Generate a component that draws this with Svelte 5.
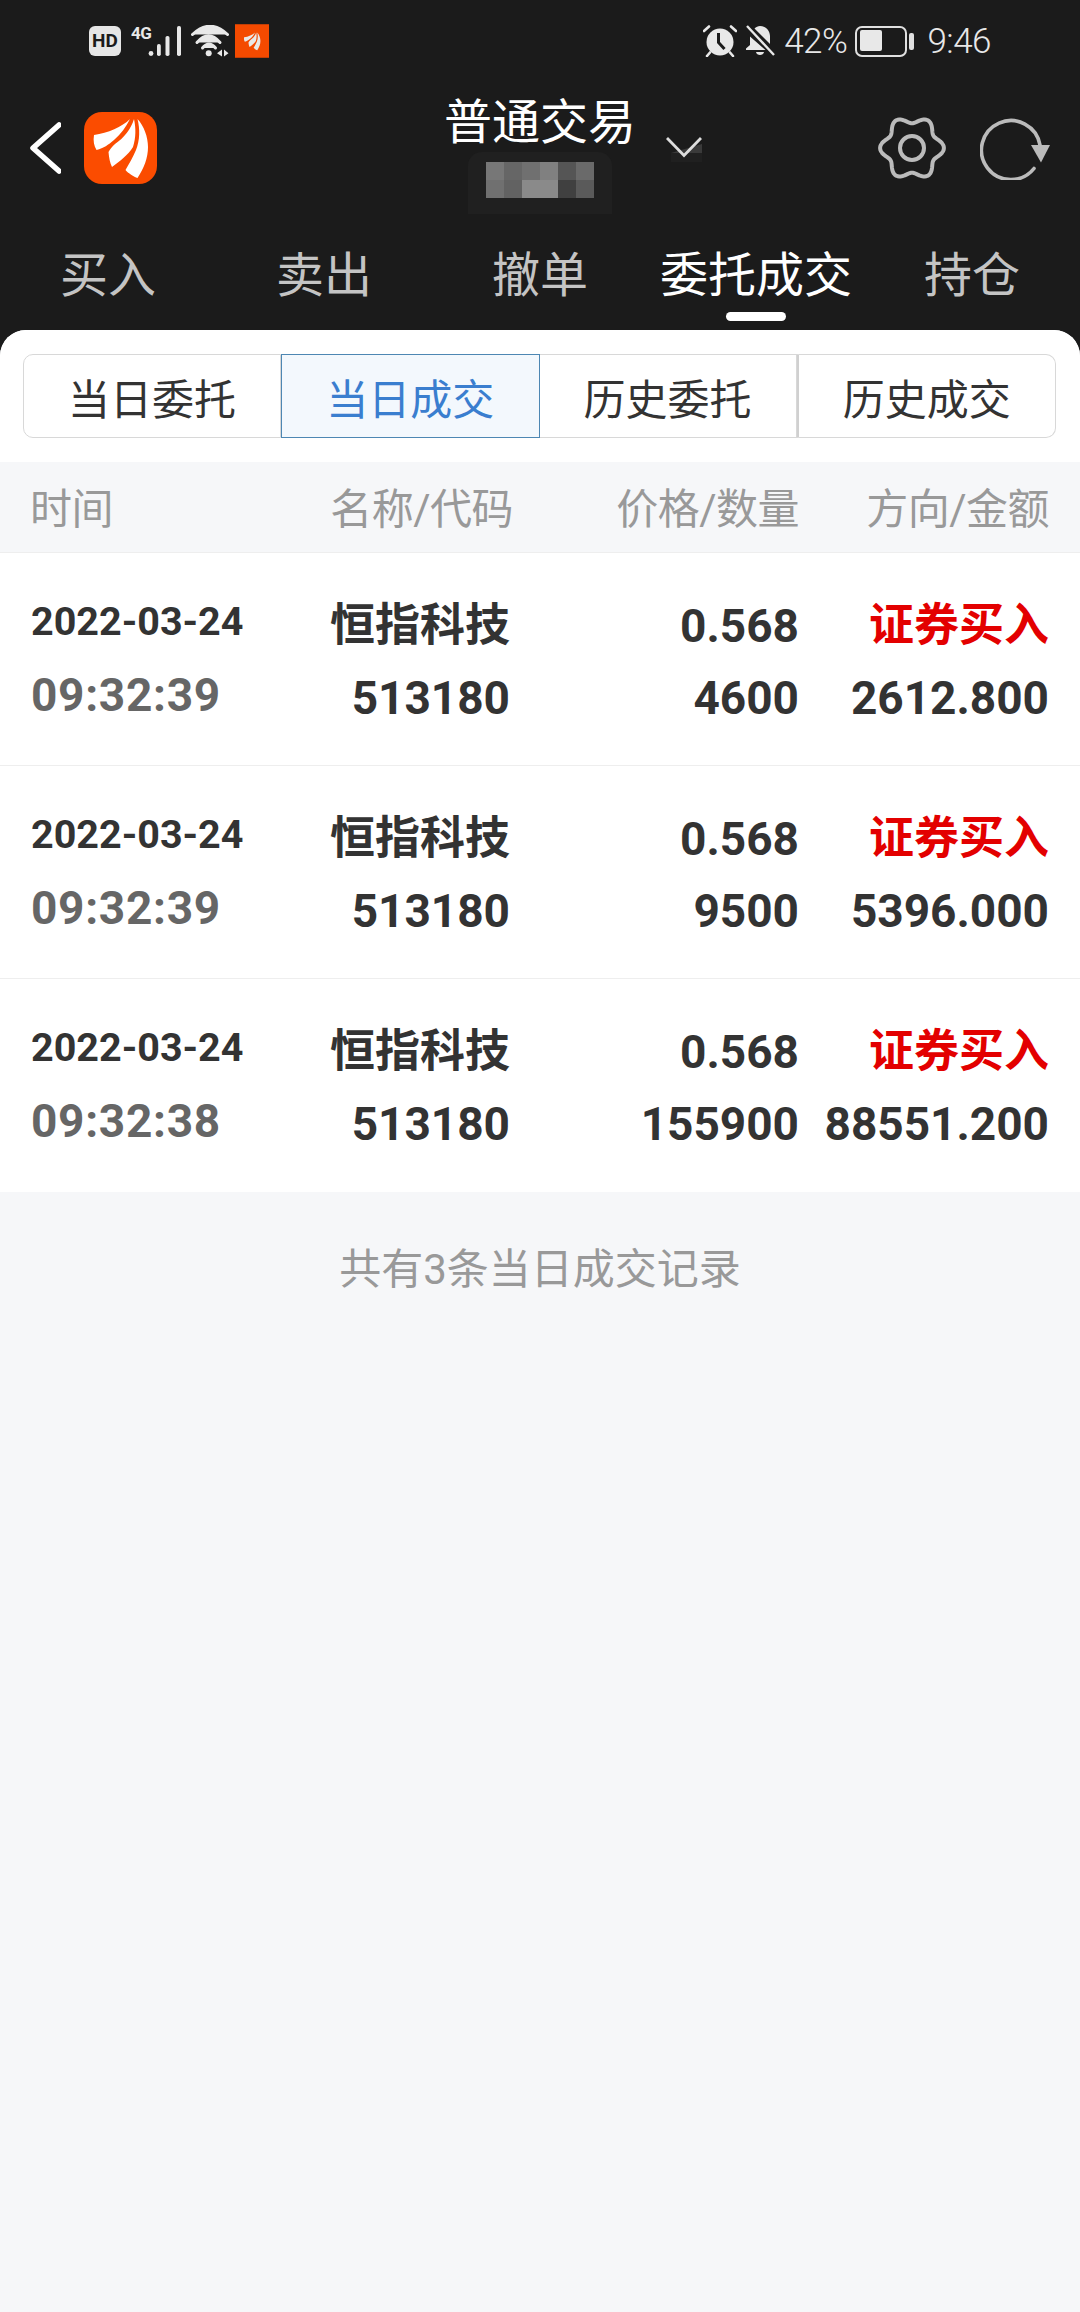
<script>
	const tabs = ['买入', '卖出', '撤单', '委托成交', '持仓'];
	const segments = ['当日委托', '当日成交', '历史委托', '历史成交'];
	const columns = ['时间', '名称/代码', '价格/数量', '方向/金额'];
	const trades = [
		{ date: '2022-03-24', time: '09:32:39', qty: '4600', amount: '2612.800' },
		{ date: '2022-03-24', time: '09:32:39', qty: '9500', amount: '5396.000' },
		{ date: '2022-03-24', time: '09:32:38', qty: '155900', amount: '88551.200' }
	];
	// redacted account number in the header
	const mosaic = ['#777', '#666', '#707070', '#808080', '#555', '#6a6a6a', '#707070', '#626262', '#8a8a8a', '#8a8a8a', '#404040', '#5a5a5a'];

	// six-lobed gear outline
	const gear = Array.from({ length: 121 }, (_, i) => {
		const a = (i / 120) * Math.PI * 2;
		const r = 28.3 + 3.6 * Math.cos(6 * a);
		return `${i ? 'L' : 'M'}${(34 + r * Math.cos(a)).toFixed(2)} ${(32 + r * Math.sin(a)).toFixed(2)}`;
	}).join('') + 'Z';
</script>

{#snippet feathers()}
	<path d="M46 7C38 15 24 21 10 23C9 29 10 34 12.5 38C20 36 24 33 30 28C37 22 42 15 46 7Z" />
	<path d="M50 7C47 17 40 26 31 32C28 35 26 37 24.5 40C25 46 26 51 28 55C36 49 44 43 49 35C52 26 52 16 50 7Z" />
	<path d="M53.5 7C56 17 56 28 52 38C49 45 45 52 41.5 58C44 61 50 65 53.5 66C60 56 64 46 64 35C64 25 60 14 53.5 7Z" />
{/snippet}

<div class="page">
	<div class="top">
		<div class="status">
			<div class="status-group">
				<span class="hd">HD</span>
				<svg class="signal" width="51" height="32" viewBox="0 0 51 32">
					<text x="0" y="14" class="net">4G</text>
					<circle cx="20" cy="28.5" r="2.4" />
					<rect x="26" y="19" width="3.8" height="12" rx="1.8" />
					<rect x="34.5" y="11" width="4" height="20" rx="1.8" />
					<rect x="46" y="1" width="4" height="30" rx="1.8" />
				</svg>
				<svg class="wifi" width="38" height="32" viewBox="0 0 38 32" fill="none" stroke="#e8e8e8" stroke-width="3" stroke-linecap="round">
					<path d="M1.500 9.500Q19 -7 36.500 9.500" />
					<path d="M6 17.500Q17.500 4 29 17.500" />
					<path d="M11.500 23Q18 15 24.500 23" />
					<circle cx="17.700" cy="28.300" r="3" fill="#e8e8e8" stroke="none" />
					<path d="M31 24.500L26 28.300L31 31.500ZM33 24.500V31.500L37.500 28.300Z" fill="#e8e8e8" stroke="none" />
				</svg>
				<svg class="mini" width="34" height="34" viewBox="0 0 73 72" fill="#fff">
					<rect width="73" height="72" fill="#f44a00" />
					<g transform="translate(13 13) scale(.65)">{@render feathers()}</g>
				</svg>
			</div>
			<div class="status-group">
				<svg width="34" height="32" viewBox="0 0 34 32" fill="#e8e8e8">
					<circle cx="17" cy="17" r="13.5" />
					<path d="M15.500 8V17.500L21.500 24" fill="none" stroke="#1b1b1b" stroke-width="3" />
					<path d="M1 6L6 1.500M33 6L28 1.500M4 31L7 27.500M30 31L27 27.500" fill="none" stroke="#e8e8e8" stroke-width="2.600" stroke-linecap="round" />
				</svg>
				<svg class="bell" width="30" height="32" viewBox="0 0 30 32" fill="#e8e8e8">
					<path d="M5 11.500L20.500 25H1V23.500L5 20ZM9.500 3.500C11 2 13 1 15 1C21 1 25 6 25 11V19Z" />
					<path d="M11 27H19C18.500 31 11.500 31 11 27Z" />
					<path d="M2 1L29 30" fill="none" stroke="#e8e8e8" stroke-width="2.400" />
				</svg>
				<span class="percent">42%</span>
				<span class="battery"><span class="level"></span></span>
				<span class="battery-tip"></span>
				<span class="clock">9:46</span>
			</div>
		</div>

		<header>
			<div class="left">
				<svg width="31" height="52" viewBox="0 0 31 52" fill="none" stroke="#fff" stroke-width="5.500" stroke-linecap="round" stroke-linejoin="round">
					<path d="M29 3L3 26L29 49" />
				</svg>
				<svg class="logo" width="73" height="72" viewBox="0 0 73 72" fill="#fff">
					<rect width="73" height="72" rx="18" fill="#fb4c00" />
					{@render feathers()}
				</svg>
			</div>
			<div class="title">
				<h1>普通交易</h1>
				<div class="blur">
					{#each mosaic as color}
						<i style="background:{color}"></i>
					{/each}
				</div>
			</div>
			<div class="right">
				<svg class="chevron" width="36" height="26" viewBox="0 0 36 26">
					<path d="M5 16L36 16V25H5Z" fill="#202020" />
					<path d="M5 16L36 7V16Z" fill="#3a3a3a" />
					<path d="M1 1L18 18.500L35 1" fill="none" stroke="#ddd" stroke-width="2.800" />
				</svg>
				<div class="actions">
					<svg width="68" height="64" viewBox="0 0 68 64" fill="none" stroke="#bbb" stroke-width="4">
						<path d={gear} stroke-linejoin="round" />
						<circle cx="34" cy="32" r="12" />
					</svg>
					<svg width="70" height="64" viewBox="0 0 70 64" fill="none">
						<path d="M54 52.500A29.500 29.500 0 1 1 60 29" stroke="#bbb" stroke-width="3.600" stroke-linecap="round" />
						<path d="M51 29H70L61 46.500Z" fill="#bbb" />
					</svg>
				</div>
			</div>
		</header>

		<nav>
			{#each tabs as tab, i}
				<button class:current={i === 3}>{tab}</button>
			{/each}
		</nav>
	</div>

	<section class="sheet">
		<div class="segments">
			{#each segments as seg, i}
				<div class="segment" class:active={i === 1}>{seg}</div>
			{/each}
		</div>

		<div class="row head">
			{#each columns as col}
				<div>{col}</div>
			{/each}
		</div>

		{#each trades as t}
			<div class="row trade">
				<div class="when">
					<div class="date">{t.date}</div>
					<div class="time">{t.time}</div>
				</div>
				<div class="cell">
					<div class="cjk">恒指科技</div>
					<div>513180</div>
				</div>
				<div class="cell">
					<div>0.568</div>
					<div>{t.qty}</div>
				</div>
				<div class="cell">
					<div class="cjk buy">证券买入</div>
					<div>{t.amount}</div>
				</div>
			</div>
		{/each}

		<p class="footer">共有3条当日成交记录</p>
	</section>
</div>

<style>
	:global(body) {
		background: #f6f7f9;
	}
	.page {
		min-height: 2312px;
		display: flex;
		flex-direction: column;
		background: #1b1b1b;
		font-family: Roboto, 'Noto Sans CJK SC', sans-serif;
	}
	.status {
		height: 82px;
		padding: 0 89px;
		display: flex;
		align-items: center;
		justify-content: space-between;
		color: #e8e8e8;
	}
	.status-group {
		display: flex;
		align-items: center;
	}
	.status svg {
		fill: #e8e8e8;
	}
	.hd {
		padding: 4px 3px;
		border-radius: 6px;
		background: #e6e6e6;
		color: #1b1b1b;
		font-size: 19px;
		font-weight: 700;
		line-height: 22px;
	}
	.net {
		font-size: 17px;
		font-weight: 700;
		letter-spacing: -0.5px;
		font-family: Roboto, sans-serif;
	}
	.signal {
		margin-left: 10px;
	}
	.wifi {
		margin-left: 9px;
	}
	.mini {
		margin-left: 6px;
	}
	.bell {
		margin-left: 8px;
	}
	.percent {
		margin-left: 9px;
		font-size: 35px;
		font-weight: 300;
		letter-spacing: -0.5px;
		line-height: 1;
	}
	.battery {
		margin-left: 8px;
		width: 52px;
		height: 31px;
		box-sizing: border-box;
		border: 2.5px solid #e0e0e0;
		border-radius: 7px;
		padding: 2.5px;
	}
	.level {
		display: block;
		width: 22px;
		height: 21px;
		background: #e8e8e8;
		border-radius: 2px;
	}
	.battery-tip {
		margin-left: 2px;
		width: 5px;
		height: 17px;
		border-radius: 2px;
		background: #e0e0e0;
	}
	.clock {
		margin-left: 13px;
		font-size: 35px;
		font-weight: 300;
		letter-spacing: -0.5px;
		line-height: 1;
	}
	header {
		height: 132px;
		display: grid;
		grid-template-columns: 1fr 186px 1fr;
	}
	.left {
		padding-left: 30px;
		display: flex;
		align-items: center;
		gap: 23px;
	}
	.title {
		padding-top: 12px;
		display: flex;
		flex-direction: column;
		align-items: center;
	}
	h1 {
		margin: 0;
		font-size: 48px;
		font-weight: 400;
		line-height: 58px;
		color: #fff;
		white-space: nowrap;
	}
	.blur {
		width: 144px;
		height: 62px;
		box-sizing: border-box;
		padding: 10px 18px;
		display: grid;
		grid-template-columns: repeat(6, 18px);
		grid-auto-rows: 18px;
		background: #202020;
		border-radius: 14px 14px 0 0;
	}
	.right {
		padding-right: 30px;
		display: flex;
		align-items: center;
	}
	.chevron {
		margin-left: 33px;
		align-self: flex-start;
		margin-top: 55px;
	}
	.actions {
		margin-left: auto;
		display: flex;
		align-items: center;
		gap: 34px;
	}
	nav {
		height: 116px;
		display: grid;
		grid-template-columns: repeat(5, 1fr);
	}
	nav button {
		position: relative;
		padding: 0 0 2px;
		border: 0;
		background: none;
		font: inherit;
		font-size: 48px;
		color: #c4c4c4;
		white-space: nowrap;
	}
	nav button.current {
		color: #fff;
	}
	nav button.current::after {
		content: '';
		position: absolute;
		left: 50%;
		bottom: 9px;
		width: 60px;
		height: 9px;
		margin-left: -30px;
		border-radius: 5px;
		background: #fff;
	}
	.sheet {
		flex: 1;
		background: #f6f7f9;
		border-radius: 26px 26px 0 0;
		overflow: hidden;
	}
	.segments {
		padding: 24px 24px 24px 23px;
		display: flex;
		background: #fff;
	}
	.segment {
		flex: 1;
		height: 84px;
		box-sizing: border-box;
		border: 1px solid #d8d8d8;
		border-left: 0;
		display: flex;
		align-items: center;
		justify-content: center;
		font-size: 42px;
		color: #333;
	}
	.segment:first-child {
		border-left: 1px solid #d8d8d8;
		border-radius: 10px 0 0 10px;
	}
	.segment:last-child {
		border-radius: 0 10px 10px 0;
		border-left: 2px solid #d0d0d0;
	}
	.segment.active {
		border: 1px solid #4d87b3;
		background: #f3f8fd;
		color: #3a7ecf;
	}
	.row {
		padding: 0 31px;
		display: grid;
		grid-template-columns: 260px 219px 289px 250px;
	}
	.row > div:not(:first-child) {
		text-align: right;
	}
	.head {
		height: 91px;
		padding-bottom: 4px;
		align-items: center;
		font-size: 42px;
		letter-spacing: -0.5px;
		color: #999;
		border-bottom: 1px solid #eee;
		box-sizing: border-box;
	}
	.head div:first-child {
		margin-left: -1px;
	}
	.head div:nth-child(2) {
		margin-right: -3px;
	}
	.trade {
		height: 213px;
		box-sizing: border-box;
		padding-top: 37px;
		background: #fff;
		border-bottom: 1px solid #eee;
		font-size: 46px;
		font-weight: 700;
		line-height: 72px;
		color: #333;
	}
	.trade:last-of-type {
		border-bottom: 0;
	}
	.when {
		margin-top: -5px;
	}
	.date {
		font-size: 39.5px;
		line-height: 74px;
	}
	.time {
		font-size: 46px;
		letter-spacing: 0.7px;
		color: #666;
	}
	.cjk {
		font-size: 45px;
	}
	.buy {
		color: #e30000;
	}
	.footer {
		margin: 51px 0 0;
		font-size: 42px;
		line-height: 54px;
		text-align: center;
		color: #999;
	}
</style>
